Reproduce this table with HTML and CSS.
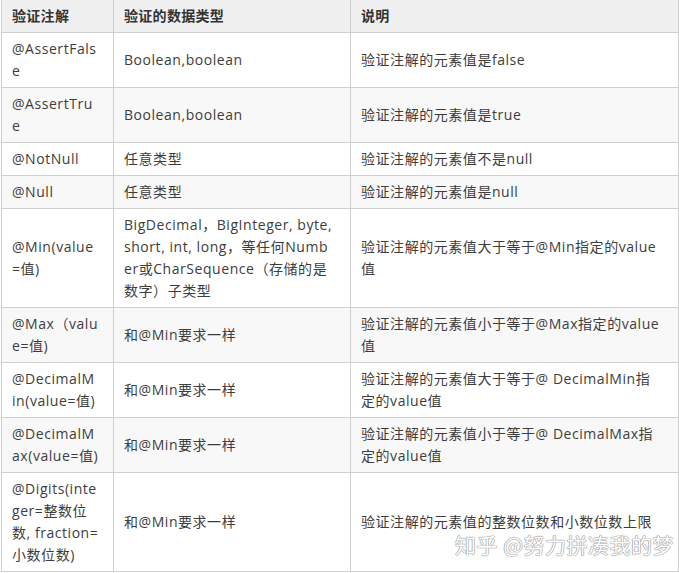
FILE: index.html
```html
<!DOCTYPE html>
<html lang="zh">
<head>
<meta charset="utf-8">
<link rel="stylesheet" href="styles.css">
</head>
<body>
<div class="wrap">
<table class="tbl">
<colgroup><col class="c1"><col class="c2"><col class="c3"></colgroup>
<thead>
<tr><th>验证注解</th><th>验证的数据类型</th><th>说明</th></tr>
</thead>
<tbody>
<tr><td>@AssertFalse</td><td>Boolean,boolean</td><td>验证注解的元素值是false</td></tr>
<tr><td>@AssertTrue</td><td>Boolean,boolean</td><td>验证注解的元素值是true</td></tr>
<tr><td>@NotNull</td><td>任意类型</td><td>验证注解的元素值不是null</td></tr>
<tr><td>@Null</td><td>任意类型</td><td>验证注解的元素值是null</td></tr>
<tr><td>@Min(value=值)</td><td>BigDecimal，BigInteger, byte, short, int, long，等任何Number或CharSequence（存储的是数字）子类型</td><td>验证注解的元素值大于等于@Min指定的value值</td></tr>
<tr><td>@Max（value=值)</td><td>和@Min要求一样</td><td>验证注解的元素值小于等于@Max指定的value值</td></tr>
<tr><td>@DecimalM<br>in(value=值)</td><td>和@Min要求一样</td><td>验证注解的元素值大于等于@ DecimalMin指定的value值</td></tr>
<tr><td>@DecimalMax(value=值)</td><td>和@Min要求一样</td><td>验证注解的元素值小于等于@ DecimalMax指定的value值</td></tr>
<tr><td>@Digits(integer=整数位数, fraction=小数位数)</td><td>和@Min要求一样</td><td>验证注解的元素值的整数位数和小数位数上限</td></tr>
</tbody>
</table>
<div class="watermark">知乎 @努力拼凑我的梦</div>
</div>
</body>
</html>
```
FILE: styles.css
```css
html, body {
  margin: 0;
  padding: 0;
  background: #fff;
}
.wrap {
  position: relative;
  width: 679px;
  height: 573px;
  padding-left: 1px;
  box-sizing: border-box;
  overflow: hidden;
}
.tbl {
  border-collapse: collapse;
  width: 677px;
  table-layout: fixed;
  font-family: "Open Sans", "Noto Sans CJK SC", sans-serif;
  font-size: 14px;
  line-height: 22px;
  letter-spacing: 0.55px;
  color: #3d3d3d;
}
.c1 { width: 112px; }
.c2 { width: 237px; }
.c3 { width: 328px; }
.tbl th, .tbl td {
  border: 1px solid #cfcfcf;
  padding: 5px 16px 5px 10px;
  text-align: left;
  vertical-align: middle;
  word-break: break-all;
  overflow-wrap: anywhere;
}
.tbl td:first-child {
  padding-right: 14px;
}
.tbl th {
  background: #f0f0f0;
  font-weight: bold;
  color: #333;
  letter-spacing: 0.3px;
}
.tbl thead tr th { border-top: none; }
.tbl tbody tr:nth-child(even) td { background: #f8f8f8; }
.watermark {
  position: absolute;
  left: 455px;
  top: 530px;
  font-family: "Noto Sans CJK SC", sans-serif;
  font-size: 21px;
  line-height: 28px;
  color: #fff;
  letter-spacing: 0.5px;
  text-shadow: 0 0 1px #888, 0 0 1px #888, 0 0 1px #999;
}
```
